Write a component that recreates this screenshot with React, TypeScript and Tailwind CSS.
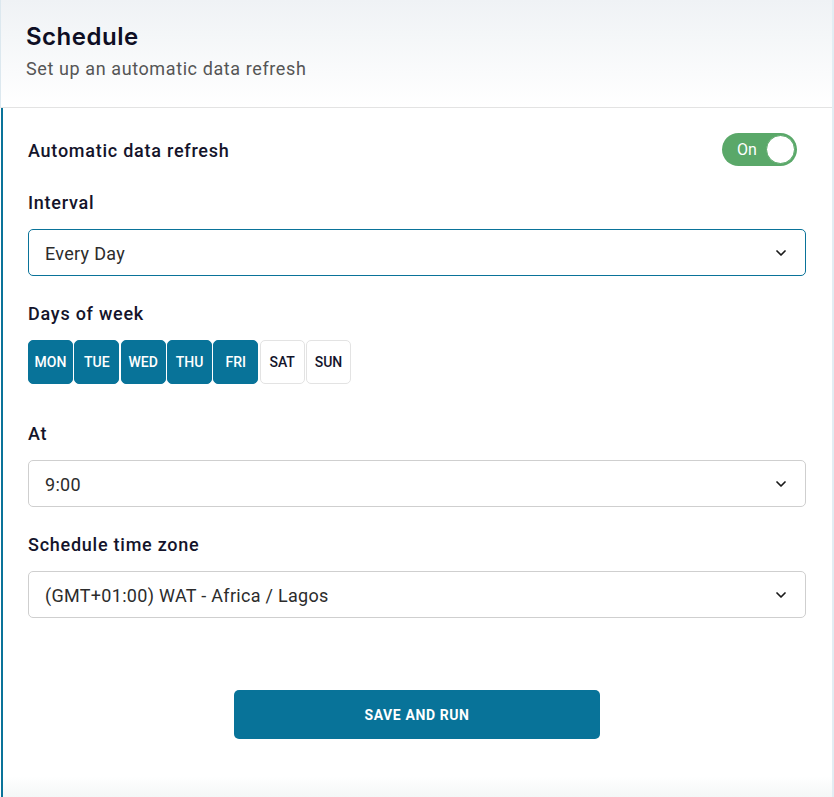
import { ChevronDown } from 'lucide-react'

const days = [
  { label: 'MON', on: true },
  { label: 'TUE', on: true },
  { label: 'WED', on: true },
  { label: 'THU', on: true },
  { label: 'FRI', on: true },
  { label: 'SAT', on: false },
  { label: 'SUN', on: false },
]

function Label({ children }: { children: React.ReactNode }) {
  return <p className="text-[18px] font-medium leading-6 tracking-[0.75px] text-[#14142b]">{children}</p>
}

function Select({ value, active }: { value: string; active?: boolean }) {
  return (
    <div
      className={`flex h-[47px] items-center justify-between rounded-[5px] border bg-white pl-4 pr-4 ${
        active ? 'border-[#0a7399]' : 'border-[#cfcfcf]'
      }`}
    >
      <span className="pt-[1px] text-[18px] tracking-[0.3px] text-[#2c2c2c]">{value}</span>
      <ChevronDown size={16} strokeWidth={2.6} className="text-[#1a1a1a]" />
    </div>
  )
}

export default function App() {
  return (
    <div className="flex h-[797px] w-[834px] flex-col border-r-2 border-[#e2edf3] bg-white font-['Roboto',sans-serif]">
      <div className="h-[108px] border-b border-l border-b-[#e3e3e3] border-l-[#dce8ef] bg-gradient-to-b from-[#eff2f5] to-white px-[25px] pt-[21px]">
        <h1 className="font-['Inter',sans-serif] text-[24px] font-semibold leading-8 tracking-[0.5px] text-[#0e0e24]">
          Schedule
        </h1>
        <p className="mt-[4px] text-[18px] leading-6 tracking-[0.6px] text-[#555555]">Set up an automatic data refresh</p>
      </div>

      <div className="ml-[1px] flex flex-1 flex-col border-l-2 border-[#0a7399] bg-gradient-to-b from-white from-[97%] to-[#f4f7f7] pl-[25px] pr-[26px]">
        <div className="mt-[25px] flex h-[33px] items-center justify-between">
          <div className="pt-[3px]">
            <Label>Automatic data refresh</Label>
          </div>
          <div className="mr-[9px] flex h-[33px] w-[75px] items-center justify-between rounded-full bg-[#5aa869] pl-[15px] pr-[2px]">
            <span className="text-[16px] text-white">On</span>
            <span className="h-[29px] w-[29px] rounded-full border border-[#5aa869] bg-white" />
          </div>
        </div>

        <div className="mt-[25px]">
          <Label>Interval</Label>
        </div>
        <div className="mt-[14px]">
          <Select value="Every Day" active />
        </div>

        <div className="mt-[26px]">
          <Label>Days of week</Label>
        </div>
        <div className="mt-[14px] flex gap-[1.33px]">
          {days.map((d) => (
            <div
              key={d.label}
              className={`flex h-[44px] w-[45px] items-center justify-center rounded-[5px] border text-[14px] font-medium ${
                d.on ? 'border-[#087399] bg-[#087399] text-white' : 'border-[#e3e3e3] bg-white text-[#14142b]'
              }`}
            >
              {d.label}
            </div>
          ))}
        </div>

        <div className="mt-[38px]">
          <Label>At</Label>
        </div>
        <div className="mt-[14px]">
          <Select value="9:00" />
        </div>

        <div className="mt-[26px]">
          <Label>Schedule time zone</Label>
        </div>
        <div className="mt-[14px]">
          <Select value="(GMT+01:00) WAT - Africa / Lagos" />
        </div>

        <div className="mt-[72px] flex justify-center">
          <button className="h-[49px] w-[366px] rounded-[5px] bg-[#087399] pt-[2px] text-[14px] font-bold tracking-[0.6px] text-white">
            SAVE AND RUN
          </button>
        </div>
      </div>
    </div>
  )
}
